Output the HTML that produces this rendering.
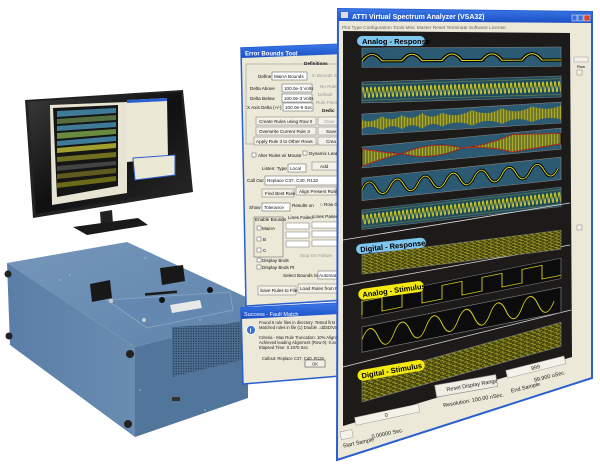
<!DOCTYPE html>
<html><head><meta charset="utf-8"><style>
html,body{margin:0;padding:0;background:#fff;width:600px;height:464px;overflow:hidden}
svg{display:block;font-family:"Liberation Sans",sans-serif}
</style></head><body>
<svg width="600" height="464" viewBox="0 0 600 464" xmlns="http://www.w3.org/2000/svg">
<defs>
<linearGradient id="scr" x1="0" y1="0" x2="1" y2="1"><stop offset="0" stop-color="#3a3a3a"/><stop offset="0.5" stop-color="#101010"/><stop offset="1" stop-color="#2a2a2a"/></linearGradient>
<linearGradient id="tb" x1="0" y1="0" x2="0" y2="1"><stop offset="0" stop-color="#3b78e8"/><stop offset="1" stop-color="#1a4fc4"/></linearGradient>
<linearGradient id="topf" x1="0" y1="0" x2="1" y2="1"><stop offset="0" stop-color="#7597bb"/><stop offset="1" stop-color="#5f83aa"/></linearGradient>
<linearGradient id="leftf" x1="0" y1="0" x2="1" y2="0"><stop offset="0" stop-color="#5a7ea6"/><stop offset="1" stop-color="#6a8cb1"/></linearGradient>
<pattern id="dense" width="4" height="24" patternUnits="userSpaceOnUse"><rect width="4" height="24" fill="#1e4a60"/><path d="M0,12 Q1,0 2,12 T4,12" stroke="#d8d020" stroke-width="1.1" fill="none"/><path d="M0,3 L4,3 M0,21 L4,21" stroke="#d8d020" stroke-width="0.3"/></pattern>
<pattern id="dy" width="3" height="24" patternUnits="userSpaceOnUse"><rect width="3" height="24" fill="#3c4a30"/><path d="M0.5,0 V24 M2,0 V24" stroke="#d8d020" stroke-width="0.7"/></pattern>
<pattern id="dig" width="6" height="4" patternUnits="userSpaceOnUse"><rect width="6" height="4" fill="#4a4a10"/><path d="M0,1 H3 V3 H6" stroke="#e0d830" stroke-width="0.5" fill="none"/></pattern>
<pattern id="vent" width="2.5" height="2.5" patternUnits="userSpaceOnUse"><rect width="2.5" height="2.5" fill="#4c6d92"/><circle cx="1.2" cy="1.2" r="0.6" fill="#1e2f44"/></pattern>
</defs>

<!-- Monitor -->
<polygon points="25,100 183,90 193,192 33,218" fill="#222"/>
<polygon points="28,102 181,92 190,189 36,214" fill="url(#scr)"/>
<polygon points="50,105 127,102 127,193 52,205" fill="#e8e4d4"/>
<polygon points="53,108 118,105 118,186 57,197" fill="#151515"/>
<g stroke="none">
<polygon points="57,111 116,108 116,113 57,117" fill="#3f7a98"/>
<polygon points="57,119 116,115 116,120 57,124" fill="#556e40"/>
<polygon points="57,126 116,122 116,127 57,131" fill="#3f7a98"/>
<polygon points="57,133 116,129 116,134 57,139" fill="#6a8a40"/>
<polygon points="57,141 116,136 116,141 57,146" fill="#3f7a98"/>
<polygon points="57,148 116,143 116,148 57,153" fill="#a0a030"/>
<polygon points="57,157 116,152 116,157 57,162" fill="#707020"/>
<polygon points="57,166 116,161 116,165 57,171" fill="#444"/>
<polygon points="57,174 116,168 116,173 57,179" fill="#605a20"/>
<polygon points="57,183 116,176 116,181 57,188" fill="#6a6a18"/>
</g>
<polygon points="127,100 167,98 168,158 127,162" fill="#ece8d6"/>
<polygon points="127,100 167,98 167,101 127,103" fill="#2a5fd0"/>
<polygon points="133,158 175,155 175,175 135,180" fill="#ece8d6" stroke="#2a5fd0" stroke-width="1"/>
<polygon points="100,212 112,210 113,224 101,226" fill="#222"/>
<polygon points="73,227 138,218 148,225 87,235" fill="#1a1a1a"/>

<!-- Box -->
<polygon points="7,263 127,242 248,298 248,318 135,347" fill="url(#topf)"/>
<polygon points="7,263 135,347 135,437 10,345" fill="url(#leftf)"/>
<polygon points="135,347 248,318 248,398 135,437" fill="#52759c"/>
<polygon points="172,327 242,323 242,360 172,377" fill="url(#vent)"/>
<polygon points="107,300 230,292 233,310 147,328" fill="#6488b0" stroke="#8aa8c8" stroke-width="0.8"/>
<polygon points="90,284 110,280 112,298 92,302" fill="#181818"/>
<polygon points="160,268 183,265 185,281 162,285" fill="#181818"/>
<rect x="145" y="292" width="32" height="2.5" fill="#1a1a1a" transform="rotate(-5 160 293)"/>
<polygon points="170,305 200,300 202,308 172,313" fill="#e8e8e8"/>
<circle cx="162" cy="300" r="3" fill="#111"/><circle cx="210" cy="290" r="3" fill="#111"/>
<circle cx="144" cy="320" r="2" fill="#ccc"/><circle cx="111" cy="301" r="2" fill="#ccc"/>
<circle cx="8" cy="274" r="3.5" fill="#222"/><circle cx="9" cy="336" r="3.5" fill="#222"/>
<circle cx="130" cy="354" r="4" fill="#222"/><circle cx="128" cy="424" r="4" fill="#222"/>
<rect x="172" y="397" width="8" height="4" fill="#333"/>
<g fill="#b8c8d8"><circle cx="60" cy="280" r="0.7"/><circle cx="70" cy="275" r="0.7"/><circle cx="145" cy="258" r="0.7"/><circle cx="200" cy="320" r="0.7"/><circle cx="140" cy="390" r="0.7"/><circle cx="205" cy="410" r="0.7"/></g>

<!-- Error Bounds Tool window -->
<polygon points="241,48 345,44 345,300 246,306" fill="#ece9d8" stroke="#2a5fd0" stroke-width="1.5"/>
<polygon points="241,48 345,44 345,54 241,58" fill="url(#tb)"/>
<g font-size="4.6" fill="#111">
<text x="245" y="55.5" fill="#fff" font-weight="bold" font-size="6">Error Bounds Tool</text>
<rect x="246" y="64" width="96" height="80" fill="none" stroke="#888" stroke-width="0.5"/>
<text x="304" y="65" font-weight="bold">Definitions</text>
<text x="258" y="78">Define</text>
<rect x="272" y="72" width="35" height="8" fill="#fff" stroke="#555" stroke-width="0.5"/><text x="274" y="78">MainA Bounds</text>
<text x="312" y="77" fill="#999">in Bounds Set</text>
<text x="250" y="90">Delta Above</text><rect x="282" y="84" width="30" height="8" fill="#fff" stroke="#555" stroke-width="0.5"/><text x="284" y="90">100.0e-3 Volts</text>
<text x="250" y="100">Delta Below</text><rect x="282" y="94" width="30" height="8" fill="#fff" stroke="#555" stroke-width="0.5"/><text x="284" y="100">100.0e-3 Volts</text>
<text x="247" y="109">X Axis Delta (+/-)</text><rect x="283" y="103" width="30" height="8" fill="#fff" stroke="#555" stroke-width="0.5"/><text x="285" y="109">100.0e-9 Sec.</text>
<text x="320" y="88" fill="#999">No Rule</text><text x="318" y="96" fill="#999">Default</text><text x="316" y="104" fill="#999">Rule Pinned</text><text x="322" y="112" font-weight="bold">Dedic</text>
<rect x="256" y="117" width="60" height="8" fill="#f4f2e8" stroke="#777" stroke-width="0.5"/><text x="259" y="123">Create Rules using Row 0</text>
<rect x="256" y="127" width="60" height="8" fill="#f4f2e8" stroke="#777" stroke-width="0.5"/><text x="259" y="133">Overwrite Current Rule 3</text>
<rect x="254" y="137" width="62" height="8" fill="#f4f2e8" stroke="#777" stroke-width="0.5"/><text x="256" y="143">Apply Rule 3 to Other Rows</text>
<rect x="318" y="117" width="24" height="8" fill="#f4f2e8" stroke="#777" stroke-width="0.5"/><text x="324" y="123" fill="#999">Clear</text>
<rect x="318" y="127" width="24" height="8" fill="#f4f2e8" stroke="#777" stroke-width="0.5"/><text x="326" y="133">Save</text>
<rect x="318" y="137" width="24" height="8" fill="#f4f2e8" stroke="#777" stroke-width="0.5"/><text x="326" y="143">Crea</text>
<rect x="252" y="153" width="4" height="4" fill="#fff" stroke="#333" stroke-width="0.4"/><text x="258" y="157">Alter Rules w/ Mouse</text>
<rect x="303" y="151" width="4" height="4" fill="#fff" stroke="#333" stroke-width="0.4"/><text x="309" y="155">Dynamic Learni</text>
<text x="262" y="170">Listen: Type</text><rect x="288" y="164" width="18" height="8" fill="#fff" stroke="#555" stroke-width="0.5"/><text x="290" y="170">Local</text>
<rect x="312" y="162" width="28" height="8" fill="#f4f2e8" stroke="#777" stroke-width="0.5"/><text x="320" y="168">Add</text>
<text x="247" y="182">Call Out</text><rect x="265" y="176" width="78" height="9" fill="#fff" stroke="#555" stroke-width="0.5"/><text x="267" y="182">Replace C37, C40, R132</text>
<rect x="262" y="189" width="32" height="8" fill="#f4f2e8" stroke="#777" stroke-width="0.5"/><text x="265" y="195">Find Best Rule</text>
<rect x="296" y="187" width="40" height="8" fill="#f4f2e8" stroke="#777" stroke-width="0.5"/><text x="299" y="193">Align Present Rule</text>
<text x="249" y="209">Show</text><rect x="262" y="203" width="28" height="8" fill="#fff" stroke="#555" stroke-width="0.5"/><text x="264" y="209">Tolerance</text>
<text x="292" y="207">Results on</text><text x="320" y="206">○ Row 0</text>
<rect x="254" y="217" width="29" height="40" fill="none" stroke="#555" stroke-width="0.5"/>
<text x="255" y="221">Enable Bounds</text><text x="288" y="219">Lines Failed</text><text x="313" y="218">Lines Passed</text>
<rect x="257" y="226" width="4" height="4" fill="#fff" stroke="#333" stroke-width="0.4"/><text x="262" y="230">MainA</text>
<rect x="257" y="237" width="4" height="4" fill="#fff" stroke="#333" stroke-width="0.4"/><text x="263" y="241">B</text>
<rect x="257" y="248" width="4" height="4" fill="#fff" stroke="#333" stroke-width="0.4"/><text x="263" y="252">C</text>
<g fill="#fff" stroke="#555" stroke-width="0.4"><rect x="286" y="223" width="23" height="6"/><rect x="286" y="232" width="23" height="6"/><rect x="286" y="241" width="23" height="6"/><rect x="312" y="222" width="26" height="6"/><rect x="312" y="231" width="26" height="6"/><rect x="312" y="240" width="26" height="6"/></g>
<rect x="257" y="258" width="4" height="4" fill="#fff" stroke="#333" stroke-width="0.4"/><text x="262" y="262">Display Bnds</text>
<rect x="257" y="265" width="4" height="4" fill="#fff" stroke="#333" stroke-width="0.4"/><text x="262" y="269">Display Bnds Pt</text>
<text x="300" y="257" fill="#999">Stop On Failure</text>
<text x="283" y="277">Select Bounds Set</text><rect x="318" y="271" width="25" height="8" fill="#fff" stroke="#555" stroke-width="0.5"/><text x="319" y="277">Automatic</text>
<rect x="258" y="286" width="38" height="9" fill="#f4f2e8" stroke="#777" stroke-width="0.5"/><text x="260" y="292">Save Rules to File</text>
<rect x="298" y="284" width="44" height="9" fill="#f4f2e8" stroke="#777" stroke-width="0.5"/><text x="300" y="290">Load Rules from File</text>
</g>

<!-- Success dialog -->
<polygon points="241,308 340,303 340,376 243,384" fill="#ece9d8" stroke="#2a5fd0" stroke-width="1.5"/>
<polygon points="241,308 340,303 340,314 241,319" fill="url(#tb)"/>
<g font-size="4.2" fill="#222">
<text x="244" y="316" fill="#fff" font-size="5.5">Success - Fault Match</text>
<circle cx="251" cy="330" r="4.5" fill="#3a74d0" stroke="#fff" stroke-width="0.8"/><text x="249.8" y="332.5" fill="#fff" font-size="6" font-weight="bold">i</text>
<text x="259" y="324">Found 6 rule files in directory. Tested first 6 file(s).</text>
<text x="259" y="329">Matched rules in file (1) Double ..ddSD\VariantIn\a404 lorrRul</text>
<text x="259" y="339">Criteria - Max Rule Truncation: 10%  Alignment Threshold: 0.9000</text>
<text x="259" y="344">Achieved leading Alignment (Row 0): 0.xx47  Rule shifted: 0.00000 Sec.</text>
<text x="259" y="349">Elapsed Time: 0.1870 Sec.</text>
<text x="262" y="360">Callout: Replace C37, C40, R132</text>
<rect x="305" y="360" width="20" height="7" fill="#f4f2e8" stroke="#333" stroke-width="0.5"/><text x="312" y="365.5">OK</text>
</g>

<!-- Spectrum analyzer window -->
<polygon points="338,9 592,12 592,378 337,460" fill="#ece9d8" stroke="#2a5fd0" stroke-width="2"/>
<polygon points="338,9 592,12 592,23 338,21" fill="url(#tb)"/>
<text x="352" y="19" fill="#fff" font-size="7" font-weight="bold">ATTI Virtual Spectrum Analyzer (VSA32)</text>
<rect x="341" y="12" width="7" height="6" fill="#ddd"/>
<rect x="572" y="15" width="5" height="6" fill="#3b6de0" stroke="#fff" stroke-width="0.5"/><rect x="578" y="15" width="5" height="6" fill="#3b6de0" stroke="#fff" stroke-width="0.5"/><rect x="584" y="15" width="6" height="6" fill="#d8442a" stroke="#fff" stroke-width="0.5"/>
<text x="342" y="29" font-size="4.8" fill="#666">Plot Type   Configuration   Tools   Misc   Master Reset   Terminate   Software License</text>
<polygon points="343,31 570,33 572,357 343,426" fill="#1c1b1a"/>
<rect x="574" y="57" width="14" height="5" fill="#f4f2e8" stroke="#999" stroke-width="0.5"/>
<text x="577" y="68" font-size="4">Row</text>
<rect x="577" y="70" width="5" height="5" fill="#f4f2e8" stroke="#666" stroke-width="0.4"/>
<rect x="577" y="225" width="5" height="5" fill="#f4f2e8" stroke="#666" stroke-width="0.4"/>

<!-- Analog response plots -->
<g transform="matrix(1,-0.005,0,0.81,362,48)"><rect width="199" height="24" fill="#2b5a72" stroke="#888" stroke-width="0.6"/>
<path d="M0,16 Q10,0 20,16 L40,16 Q50,0 60,16 L80,16 Q90,0 100,16 L120,16 Q130,0 140,16 L160,16 Q170,0 180,16 L199,16" stroke="#000" stroke-width="4" fill="none"/>
<path d="M0,16 Q10,0 20,16 L40,16 Q50,0 60,16 L80,16 Q90,0 100,16 L120,16 Q130,0 140,16 L160,16 Q170,0 180,16 L199,16" stroke="#e0d820" stroke-width="1.2" fill="none"/></g>
<g transform="matrix(1,-0.03,0,0.875,362,82)"><rect width="199" height="24" fill="url(#dense)" stroke="#888" stroke-width="0.6"/></g>
<g transform="matrix(1,-0.06,0,0.875,362,114)"><rect width="199" height="24" fill="#2b5a72" stroke="#888" stroke-width="0.6"/>
<path d="M0,7 Q10,12 20,4 Q30,12 40,4 Q50,12 60,3 Q70,12 80,4 Q95,12 110,3 Q125,12 140,3 Q155,12 170,3 Q185,10 199,4 L199,20 Q185,14 170,21 Q155,12 140,21 Q125,12 110,21 Q95,12 80,20 Q70,12 60,21 Q50,12 40,20 Q30,12 20,20 Q10,12 0,17Z" fill="url(#dy)"/></g>
<g transform="matrix(1,-0.095,0,0.875,362,147)"><rect width="199" height="24" fill="#2b5a72" stroke="#888" stroke-width="0.6"/>
<path d="M0,2 Q25,10 40,12 Q70,0 100,12 Q125,12 150,2 L199,6 L199,18 L150,22 Q125,12 100,12 Q70,24 40,12 Q25,14 0,22Z" fill="url(#dy)" stroke="#000" stroke-width="1"/>
<path d="M0,2 Q25,10 40,12 Q70,0 100,12 Q125,12 150,2 L199,6 M0,22 Q25,14 40,12 Q70,24 100,12 Q125,12 150,22 L199,18" stroke="#e03020" stroke-width="0.8" fill="none"/></g>
<g transform="matrix(1,-0.105,0,0.94,362,178)"><rect width="199" height="24" fill="#2b5a72" stroke="#888" stroke-width="0.6"/>
<path d="M0,12 Q7,-2 14,12 T28,12 T42,12 T56,12 T70,12 T84,12 T98,12 T112,12 T126,12 T140,12 T154,12 T168,12 T182,12 T196,12" stroke="#000" stroke-width="3" fill="none"/>
<path d="M0,12 Q7,-2 14,12 T28,12 T42,12 T56,12 T70,12 T84,12 T98,12 T112,12 T126,12 T140,12 T154,12 T168,12 T182,12 T196,12" stroke="#e0d820" stroke-width="1" fill="none"/></g>
<g transform="matrix(1,-0.115,0,0.81,362,210)"><rect width="199" height="24" fill="url(#dense)" stroke="#888" stroke-width="0.6"/></g>

<rect x="357" y="36" width="68" height="10" rx="5" fill="#7ec6ee"/><text x="362" y="44" font-size="7.5" font-weight="bold" fill="#000">Analog - Response</text>

<!-- separators -->
<line x1="343" y1="240" x2="570" y2="203" stroke="#ddd" stroke-width="0.8"/>
<line x1="343" y1="286" x2="570" y2="245" stroke="#ddd" stroke-width="0.8"/>
<line x1="343" y1="367" x2="571" y2="310" stroke="#ddd" stroke-width="0.8"/>

<!-- digital response -->
<g transform="matrix(1,-0.125,0,0.8,362,255)"><rect width="199" height="24" fill="url(#dig)" stroke="#888" stroke-width="0.6"/></g>
<g transform="rotate(-6 390 246)"><rect x="356" y="241" width="70" height="10" rx="5" fill="#7ec6ee"/><text x="360" y="249" font-size="7.5" font-weight="bold" fill="#000">Digital - Response</text></g>

<!-- A6 square -->
<g transform="matrix(1,-0.2,0,0.85,362,298)"><rect width="199" height="24" fill="#0c0c0c" stroke="#888" stroke-width="0.6"/>
<path d="M0,20 L0,4 L20,4 L20,20 L40,20 L40,4 L60,4 L60,20 L80,20 L80,4 L100,4 L100,20 L120,20 L120,4 L140,4 L140,20 L160,20 L160,4 L180,4 L180,20 L199,20" stroke="#d8d020" stroke-width="0.9" fill="none"/></g>
<g transform="rotate(-8 390 290)"><rect x="358" y="285" width="66" height="11" rx="5.5" fill="#f4ea10"/><text x="362" y="293.5" font-size="7.5" font-weight="bold" fill="#000">Analog - Stimulus</text></g>
<!-- A7 sine -->
<g transform="matrix(1,-0.2,0,1.05,362,327)"><rect width="199" height="24" fill="#0c0c0c" stroke="#888" stroke-width="0.6"/>
<path d="M0,12 Q8,-6 16,12 T32,12 T48,12 T64,12 T80,12 T96,12 T112,12 T128,12 T144,12 T160,12 T176,12 T192,12" stroke="#d8d020" stroke-width="0.9" fill="none"/></g>
<!-- digital stim -->
<g transform="matrix(1,-0.28,0,1.0,362,378)"><rect width="199" height="24" fill="url(#dig)" stroke="#888" stroke-width="0.6"/></g>
<g transform="rotate(-10 390 370)"><rect x="357" y="365" width="68" height="11" rx="5.5" fill="#f4ea10"/><text x="361" y="373.5" font-size="7.5" font-weight="bold" fill="#000">Digital - Stimulus</text></g>
<text x="445" y="388" font-size="4" fill="#ccc" transform="rotate(-15 445 388)">Time (seconds)</text>

<!-- bottom controls -->
<g font-size="5.5" fill="#222">
<g transform="rotate(-10 465 385)"><rect x="435" y="380" width="62" height="12" fill="#f0eee4" stroke="#888" stroke-width="0.6"/><text x="446" y="388">Reset Display Range</text>
<text x="440" y="403">Resolution: 100.00 nSec.</text></g>
<g transform="rotate(-12 400 415)"><rect x="355" y="408" width="65" height="8" fill="#f4f2e8" stroke="#999" stroke-width="0.5"/><text x="385" y="414">0</text></g>
<g transform="rotate(-14 530 385)"><rect x="510" y="365" width="60" height="8" fill="#f4f2e8" stroke="#999" stroke-width="0.5"/><text x="535" y="371">999</text>
<text x="510" y="388">End Sample</text><text x="535" y="383">99.900 uSec.</text></g>
<g transform="rotate(-12 360 440)"><rect x="342" y="428" width="12" height="8" fill="#f4f2e8" stroke="#999" stroke-width="0.5"/>
<text x="342" y="444">Start Sample</text><text x="372" y="441">0.00000 Sec.</text></g>
</g>
</svg>
</body></html>
